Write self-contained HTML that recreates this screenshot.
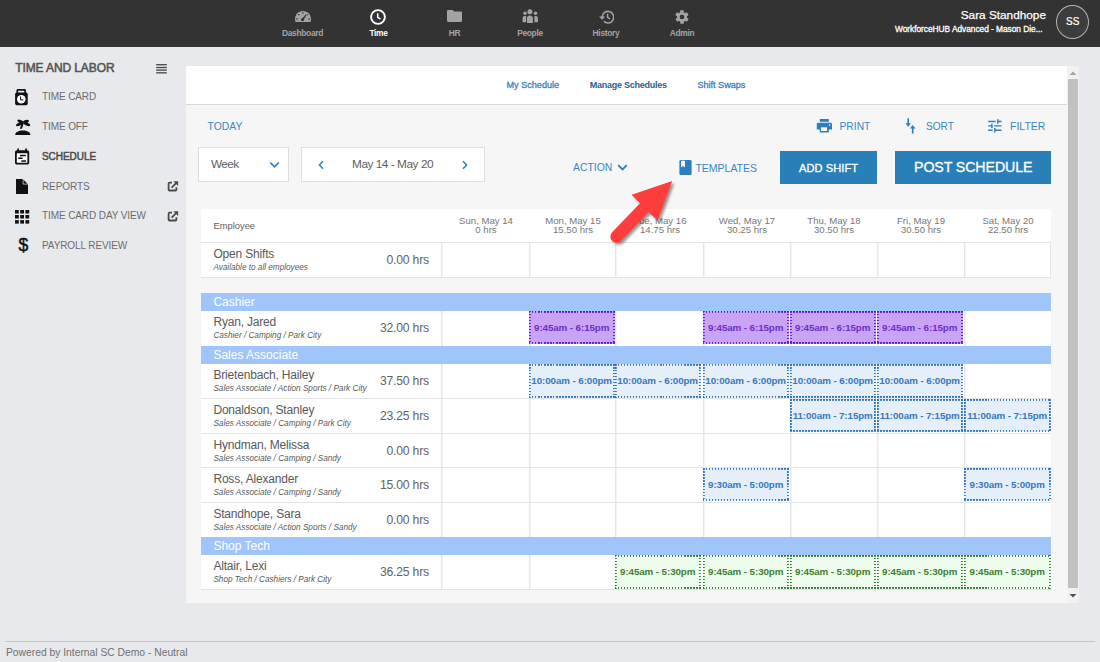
<!DOCTYPE html><html><head><meta charset="utf-8"><title>Schedule</title><style>
*{box-sizing:border-box;margin:0;padding:0}
html,body{width:1100px;height:662px;overflow:hidden}
body{position:relative;background:#e8e9ed;font-family:"Liberation Sans",sans-serif;color:#444}
.abs{position:absolute}
svg{display:block}
.t{position:absolute;white-space:nowrap;line-height:1}
.b{font-weight:bold}
.i{font-style:italic}
</style></head><body><div class="abs" style="left:0;top:0;width:1100px;height:47px;background:#333333"></div><div class="abs" style="left:295px;top:11px;width:16px;height:11px"><svg width="16" height="11" viewBox="0 0 16 11"><path fill="#a3a3a3" d="M8 0C3.6 0 0 3.6 0 8c0 1.1.2 2.1.6 3h14.8c.4-.9.6-1.9.6-3 0-4.4-3.6-8-8-8z"/><g fill="#333"><circle cx="8" cy="2" r=".8"/><circle cx="3.8" cy="3.8" r=".8"/><circle cx="12.2" cy="3.8" r=".8"/><circle cx="2" cy="8" r=".8"/><circle cx="14" cy="8" r=".8"/><circle cx="7.6" cy="8.6" r="1.6"/><path d="M7 8l3.6-4.4.8.6L8.4 9z"/></g></svg></div><div class="t" style="left:202.5px;width:200px;text-align:center;top:28.89px;font-size:8.4px;color:#a3a3a3;font-weight:bold;letter-spacing:-0.3px">Dashboard</div><div class="abs" style="left:370px;top:9px;width:16px;height:16px"><svg width="16" height="16" viewBox="0 0 16 16"><circle cx="8" cy="8" r="6.9" fill="none" stroke="#fff" stroke-width="1.9"/><path d="M7.7 4.3v4l2.7 1.7" fill="none" stroke="#fff" stroke-width="1.5"/></svg></div><div class="t" style="left:278.5px;width:200px;text-align:center;top:28.89px;font-size:8.4px;color:#ffffff;font-weight:bold;letter-spacing:-0.3px">Time</div><div class="abs" style="left:447px;top:10px;width:15px;height:12px"><svg width="15" height="12" viewBox="0 0 15 12"><path fill="#a3a3a3" d="M1.2 0h4.6l1.5 1.5h6.5c.7 0 1.2.5 1.2 1.2v8.1c0 .7-.5 1.2-1.2 1.2H1.2C.5 12 0 11.5 0 10.8V1.2C0 .5.5 0 1.2 0z"/></svg></div><div class="t" style="left:354.5px;width:200px;text-align:center;top:28.89px;font-size:8.4px;color:#a3a3a3;font-weight:bold;letter-spacing:-0.3px">HR</div><div class="abs" style="left:520px;top:8px;width:20px;height:17px"><svg width="20" height="17" viewBox="520 8 20 17"><g fill="#a3a3a3"><circle cx="529.9" cy="11.7" r="2.5"/><circle cx="525" cy="13.2" r="1.8"/><circle cx="535.5" cy="13.2" r="1.8"/><path d="M526.9 23.1v-4.8c0-1.7 1.3-2.9 3-2.9s3 1.2 3 2.9v4.8z"/><path d="M522.6 22.2v-4.2c0-1 .8-1.9 1.9-1.9h1.6v6.1z"/><path d="M537.9 22.2v-4.2c0-1-.8-1.9-1.9-1.9h-1.6v6.1z"/></g></svg></div><div class="t" style="left:430px;width:200px;text-align:center;top:28.89px;font-size:8.4px;color:#a3a3a3;font-weight:bold;letter-spacing:-0.3px">People</div><div class="abs" style="left:599px;top:10px;width:15px;height:14px"><svg width="15" height="14" viewBox="0 0 15 14"><path d="M3.1 7.2A5.8 5.8 0 1 1 4.9 11.4" fill="none" stroke="#a3a3a3" stroke-width="1.6"/><path fill="#a3a3a3" d="M0 6.6h6.2L3.1 9.8z"/><path d="M8.6 3.8v3.6l2.4 1.5" fill="none" stroke="#a3a3a3" stroke-width="1.4"/></svg></div><div class="t" style="left:506px;width:200px;text-align:center;top:28.89px;font-size:8.4px;color:#a3a3a3;font-weight:bold;letter-spacing:-0.3px">History</div><div class="abs" style="left:674px;top:9px;width:16px;height:16px"><svg width="16" height="16" viewBox="0 0 24 24"><path fill="#a3a3a3" d="M19.4 13c.04-.3.1-.6.1-1s0-.7-.1-1l2.1-1.6c.2-.2.2-.4.1-.6l-2-3.5c-.1-.2-.4-.3-.6-.2l-2.5 1c-.5-.4-1.1-.7-1.7-1l-.4-2.7c0-.2-.2-.4-.5-.4h-4c-.3 0-.5.2-.5.4l-.4 2.7c-.6.3-1.2.6-1.7 1l-2.5-1c-.2-.1-.5 0-.6.2l-2 3.5c-.1.2-.1.5.1.6L4.6 11c0 .3-.1.7-.1 1s0 .7.1 1l-2.1 1.6c-.2.2-.2.4-.1.6l2 3.5c.1.2.4.3.6.2l2.5-1c.5.4 1.1.7 1.7 1l.4 2.7c0 .2.2.4.5.4h4c.3 0 .5-.2.5-.4l.4-2.7c.6-.3 1.2-.6 1.7-1l2.5 1c.2.1.5 0 .6-.2l2-3.5c.1-.2.1-.5-.1-.6zM12 15.5a3.5 3.5 0 110-7 3.5 3.5 0 010 7z"/></svg></div><div class="t" style="left:582px;width:200px;text-align:center;top:28.89px;font-size:8.4px;color:#a3a3a3;font-weight:bold;letter-spacing:-0.3px">Admin</div><div class="t" style="right:54px;top:9.91px;font-size:11.8px;color:#fff;-webkit-text-stroke:0.25px #fff">Sara Standhope</div><div class="t" style="right:57.5px;top:24.89px;font-size:8.4px;color:#fff;-webkit-text-stroke:0.3px #fff;letter-spacing:-0.05px">WorkforceHUB Advanced - Mason Die...</div><div class="abs" style="left:1056px;top:5px;width:33px;height:34px;border-radius:50%;border:1.5px solid #b4b4b4;background:#3d3d3d"></div><div class="t" style="left:972.7px;width:200px;text-align:center;top:16.93px;font-size:10px;color:#fff;-webkit-text-stroke:0.2px #fff">SS</div><div class="t" style="left:15.2px;top:62.44px;font-size:12px;color:#555;-webkit-text-stroke:0.55px #555;letter-spacing:-0.1px">TIME AND LABOR</div><svg class="abs" style="left:156px;top:63px" width="11" height="12" viewBox="0 0 11 12"><g fill="#4a4a4a"><rect x="0.2" y="1.05" width="10.6" height="1.35"/><rect x="0.2" y="3.85" width="10.6" height="1.35"/><rect x="0.2" y="6.45" width="10.6" height="1.35"/><rect x="0.2" y="9.15" width="10.6" height="1.35"/></g></svg><div class="t" style="left:42px;top:91.53px;font-size:10px;color:#6c6c6c;letter-spacing:-0.1px">TIME CARD</div><div class="t" style="left:42px;top:122.03px;font-size:10px;color:#6c6c6c;letter-spacing:-0.1px">TIME OFF</div><div class="t" style="left:42px;top:151.94px;font-size:10px;color:#4a4a4a;-webkit-text-stroke:0.45px #4a4a4a;letter-spacing:-0.05px">SCHEDULE</div><div class="t" style="left:42px;top:181.73px;font-size:10px;color:#6c6c6c;letter-spacing:-0.1px">REPORTS</div><div class="t" style="left:42px;top:210.84px;font-size:10px;color:#6c6c6c;letter-spacing:-0.1px">TIME CARD DAY VIEW</div><div class="t" style="left:42px;top:240.53px;font-size:10px;color:#6c6c6c;letter-spacing:-0.1px">PAYROLL REVIEW</div><svg class="abs" style="left:12px;top:86px" width="20" height="22" viewBox="12 86 20 22"><path fill="#111" d="M16.4 93V90.6c0-.9.6-1.5 1.5-1.5h6.6c.9 0 1.5.6 1.5 1.5V93h-1.7v-2.2h-6.2V93z"/><rect x="15.1" y="92.6" width="12.6" height="12.6" rx="1.6" fill="#111"/><circle cx="21.3" cy="99.2" r="4.3" fill="#fff"/><path d="M20.6 96.4v3.5h2.8" stroke="#111" stroke-width="1" fill="none"/></svg><svg class="abs" style="left:12px;top:116px" width="22" height="22" viewBox="12 116 22 22"><g fill="#111"><ellipse cx="20.3" cy="121.5" rx="3.2" ry="1.5" transform="rotate(22 20.3 121.5)"/><ellipse cx="25.9" cy="121.6" rx="3.1" ry="1.6" transform="rotate(-14 25.9 121.6)"/><ellipse cx="19.4" cy="124.2" rx="3.6" ry="1.55" transform="rotate(-24 19.4 124.2)"/><ellipse cx="27" cy="124.1" rx="3.5" ry="1.55" transform="rotate(24 27 124.1)"/><path d="M22 123h1.9l-2 5.8h-2.1z"/><path d="M15.2 135c0-2.7 3.4-4.4 7.6-4.4s7.6 1.7 7.6 4.4z"/></g></svg><svg class="abs" style="left:12px;top:146px" width="20" height="21" viewBox="12 146 20 21"><path fill="#111" d="M17.3 148.6h1.7v1.6h6.2v-1.6h1.7v1.6h.4c1 0 1.9.9 1.9 1.9v10.6c0 1-.9 1.9-1.9 1.9H16.9c-1 0-1.9-.9-1.9-1.9V152.1c0-1 .9-1.9 1.9-1.9h.4z"/><rect x="16.8" y="153.3" width="10.6" height="9.4" rx=".3" fill="#fff"/><g fill="#111"><rect x="20" y="154.8" width="5.8" height="1.5"/><rect x="18.2" y="157.5" width="4.4" height="1.5"/><rect x="21.3" y="160.3" width="4.8" height="1.5"/></g></svg><svg class="abs" style="left:12px;top:176px" width="20" height="20" viewBox="12 176 20 20"><path fill="#111" d="M16 179h6.8l5.2 5.2V194H16z"/><path d="M23.1 179v5.1h4.9" fill="none" stroke="#e8e9ed" stroke-width=".7"/></svg><svg class="abs" style="left:15px;top:210px" width="15" height="14" viewBox="0 0 15 14"><g fill="#111"><rect x="0" y="0" width="3.8" height="3.5"/><rect x="0" y="5" width="3.8" height="3.5"/><rect x="0" y="10.1" width="3.8" height="3.5"/><rect x="5.2" y="0" width="3.8" height="3.5"/><rect x="5.2" y="5" width="3.8" height="3.5"/><rect x="5.2" y="10.1" width="3.8" height="3.5"/><rect x="10.4" y="0" width="3.8" height="3.5"/><rect x="10.4" y="5" width="3.8" height="3.5"/><rect x="10.4" y="10.1" width="3.8" height="3.5"/></g></svg><div class="t" style="left:18.5px;top:237.19px;font-size:17.5px;color:#111;-webkit-text-stroke:0.5px #111">$</div><svg class="abs" style="left:167px;top:181px" width="12" height="11" viewBox="0 0 12 11"><path d="M5 1.7H2.6c-.6 0-1 .4-1 1v5.8c0 .6.4 1 1 1h5.8c.6 0 1-.4 1-1V6.2" fill="none" stroke="#4a4a4a" stroke-width="1.8"/><path d="M6.4.3h4.7V5z" fill="#4a4a4a"/><path d="M4.6 6.6L9.6 1.7" stroke="#4a4a4a" stroke-width="1.8"/></svg><svg class="abs" style="left:167px;top:211px" width="12" height="11" viewBox="0 0 12 11"><path d="M5 1.7H2.6c-.6 0-1 .4-1 1v5.8c0 .6.4 1 1 1h5.8c.6 0 1-.4 1-1V6.2" fill="none" stroke="#4a4a4a" stroke-width="1.8"/><path d="M6.4.3h4.7V5z" fill="#4a4a4a"/><path d="M4.6 6.6L9.6 1.7" stroke="#4a4a4a" stroke-width="1.8"/></svg><div class="abs" style="left:186px;top:66px;width:881px;height:537px;background:#f6f6f6"></div><div class="abs" style="left:186px;top:66px;width:881px;height:39px;background:#fff;border-bottom:1px solid #d8d8d8"></div><div class="t" style="left:506.5px;top:80.80px;font-size:9.1px;color:#3a7fc0;-webkit-text-stroke:0.3px #3a7fc0">My Schedule</div><div class="t" style="left:589.8px;top:80.88px;font-size:9px;color:#2d5e90;font-weight:bold;letter-spacing:-0.25px">Manage Schedules</div><div class="t" style="left:697.4px;top:80.80px;font-size:9.1px;color:#3a7fc0;-webkit-text-stroke:0.3px #3a7fc0">Shift Swaps</div><div class="abs" style="left:1067px;top:66px;width:12px;height:537px;background:#f1f1f1"></div><div class="abs" style="left:1068px;top:79px;width:10px;height:509px;background:#c1c1c1"></div><svg class="abs" style="left:1068px;top:70px" width="10" height="6"><path d="M1.5 5h7L5 1.5z" fill="#a3a3a3"/></svg><svg class="abs" style="left:1068px;top:593px" width="10" height="6"><path d="M1.5 1h7L5 4.5z" fill="#505050"/></svg><div class="abs" style="left:5px;top:641px;width:1090px;height:1px;background:#c6c6c6"></div><div class="t" style="left:6px;top:647.98px;font-size:10.3px;color:#707070;">Powered by Internal SC Demo - Neutral</div><div class="t" style="left:207.5px;top:121.50px;font-size:10.4px;color:#3a86c4;">TODAY</div><div class="abs" style="left:198px;top:147px;width:91px;height:35px;background:#fff;border:1px solid #dedede"></div><div class="t" style="left:211px;top:159.21px;font-size:11.8px;color:#5e5e5e;letter-spacing:-0.6px">Week</div><svg class="abs" style="left:269px;top:161px" width="11" height="8"><path d="M1.2 1.5l4.3 4.3 4.3-4.3" fill="none" stroke="#2b7fbf" stroke-width="1.7"/></svg><div class="abs" style="left:301px;top:147px;width:184px;height:35px;background:#fff;border:1px solid #dedede"></div><div class="t" style="left:352px;top:158.71px;font-size:11.8px;color:#5e5e5e;letter-spacing:-0.45px">May 14 - May 20</div><svg class="abs" style="left:317px;top:160px" width="8" height="10"><path d="M6 1.3L2.4 5 6 8.7" fill="none" stroke="#2b7fbf" stroke-width="1.5"/></svg><svg class="abs" style="left:461px;top:160px" width="8" height="10"><path d="M2 1.3L5.6 5 2 8.7" fill="none" stroke="#2b7fbf" stroke-width="1.5"/></svg><svg class="abs" style="left:814px;top:117px" width="20" height="18" viewBox="814 117 20 18"><g fill="#2b7fbf"><rect x="819.8" y="119" width="9" height="2.8"/><path d="M818.3 122.8h12.2c.9 0 1.5.6 1.5 1.5v5.3h-3.2v3h-9v-3h-3V124.3c0-.9.6-1.5 1.5-1.5z"/></g><rect x="821" y="127.3" width="6" height="3.7" fill="#f6f6f6"/><circle cx="829.6" cy="125.1" r=".8" fill="#f6f6f6"/></svg><div class="t" style="left:839.5px;top:122.08px;font-size:10.3px;color:#3a86c4;">PRINT</div><svg class="abs" style="left:902px;top:116px" width="16" height="19" viewBox="902 116 16 19"><g fill="#2b7fbf" stroke="#2b7fbf"><path d="M908.2 118.2V124" stroke-width="1.6" fill="none"/><path d="M905.4 123.3H911L908.2 126.7z" stroke="none"/><path d="M909.9 128.5H915.5L912.7 125z" stroke="none"/><path d="M912.7 127.8V133.6" stroke-width="1.6" fill="none"/></g></svg><div class="t" style="left:926px;top:122.25px;font-size:10.1px;color:#3a86c4;">SORT</div><svg class="abs" style="left:985.6px;top:116.7px" width="17.76" height="17.76" viewBox="0 0 24 24"><path fill="#2b7fbf" d="M3 17v2h6v-2H3zM3 5v2h10V5H3zm10 16v-2h8v-2h-8v-2h-2v6h2zM7 9v2H3v2h4v2h2V9H7zm14 4v-2H11v2h10zm-6-4h2V7h4V5h-4V3h-2v6z"/></svg><div class="t" style="left:1010px;top:121.11px;font-size:10.5px;color:#3a86c4;">FILTER</div><div class="t" style="left:573px;top:163.40px;font-size:10.4px;color:#3a86c4;">ACTION</div><svg class="abs" style="left:617px;top:164px" width="11" height="7"><path d="M1.2 1.2l4.3 4.3 4.3-4.3" fill="none" stroke="#2b7fbf" stroke-width="1.8"/></svg><svg class="abs" style="left:678px;top:158px" width="16" height="19" viewBox="678 158 16 19"><rect x="679.4" y="160" width="12.2" height="15" rx="1.3" fill="#2b7fbf"/><path d="M681 160.8h4v6.8l-2-1.5-2 1.5z" fill="#f6f6f6"/></svg><div class="t" style="left:695.4px;top:162.51px;font-size:10.5px;color:#3a86c4;">TEMPLATES</div><div class="abs" style="left:780px;top:151px;width:97px;height:33px;background:#2980b9"></div><div class="t" style="left:728.6px;width:200px;text-align:center;top:162.60px;font-size:11.1px;color:#fff;-webkit-text-stroke:0.3px #fff;letter-spacing:0.05px">ADD SHIFT</div><div class="abs" style="left:895px;top:151px;width:156px;height:33px;background:#2980b9"></div><div class="t" style="left:873.2px;width:200px;text-align:center;top:160.28px;font-size:14.2px;color:#fff;-webkit-text-stroke:0.3px #fff;letter-spacing:-0.1px">POST SCHEDULE</div><div class="abs" style="left:201px;top:209px;width:850px;height:68px;background:#fff"></div><div class="abs" style="left:201px;top:242px;width:850px;height:1px;background:#e4e4e4"></div><div class="abs" style="left:201px;top:277px;width:850px;height:1px;background:#e4e4e4"></div><div class="abs" style="left:441px;top:243px;width:2px;height:34px;background:linear-gradient(90deg,#e6e6e6 50%,#f3f3f3 50%)"></div><div class="abs" style="left:529px;top:243px;width:2px;height:34px;background:linear-gradient(90deg,#e6e6e6 50%,#f3f3f3 50%)"></div><div class="abs" style="left:615px;top:243px;width:2px;height:34px;background:linear-gradient(90deg,#e6e6e6 50%,#f3f3f3 50%)"></div><div class="abs" style="left:703px;top:243px;width:2px;height:34px;background:linear-gradient(90deg,#e6e6e6 50%,#f3f3f3 50%)"></div><div class="abs" style="left:790px;top:243px;width:2px;height:34px;background:linear-gradient(90deg,#e6e6e6 50%,#f3f3f3 50%)"></div><div class="abs" style="left:877px;top:243px;width:2px;height:34px;background:linear-gradient(90deg,#e6e6e6 50%,#f3f3f3 50%)"></div><div class="abs" style="left:964px;top:243px;width:2px;height:34px;background:linear-gradient(90deg,#e6e6e6 50%,#f3f3f3 50%)"></div><div class="t" style="left:213.4px;top:220.84px;font-size:9.4px;color:#626262;">Employee</div><div class="abs" style="left:1050px;top:243px;width:1px;height:34px;background:#e4e4e4"></div><div class="t" style="left:386px;width:200px;text-align:center;top:216.37px;font-size:9.6px;color:#777;">Sun, May 14</div><div class="t" style="left:386px;width:200px;text-align:center;top:225.37px;font-size:9.6px;color:#777;">0 hrs</div><div class="t" style="left:473px;width:200px;text-align:center;top:216.37px;font-size:9.6px;color:#777;">Mon, May 15</div><div class="t" style="left:473px;width:200px;text-align:center;top:225.37px;font-size:9.6px;color:#777;">15.50 hrs</div><div class="t" style="left:560px;width:200px;text-align:center;top:216.37px;font-size:9.6px;color:#777;">Tue, May 16</div><div class="t" style="left:560px;width:200px;text-align:center;top:225.37px;font-size:9.6px;color:#777;">14.75 hrs</div><div class="t" style="left:647px;width:200px;text-align:center;top:216.37px;font-size:9.6px;color:#777;">Wed, May 17</div><div class="t" style="left:647px;width:200px;text-align:center;top:225.37px;font-size:9.6px;color:#777;">30.25 hrs</div><div class="t" style="left:734px;width:200px;text-align:center;top:216.37px;font-size:9.6px;color:#777;">Thu, May 18</div><div class="t" style="left:734px;width:200px;text-align:center;top:225.37px;font-size:9.6px;color:#777;">30.50 hrs</div><div class="t" style="left:821px;width:200px;text-align:center;top:216.37px;font-size:9.6px;color:#777;">Fri, May 19</div><div class="t" style="left:821px;width:200px;text-align:center;top:225.37px;font-size:9.6px;color:#777;">30.50 hrs</div><div class="t" style="left:908px;width:200px;text-align:center;top:216.37px;font-size:9.6px;color:#777;">Sat, May 20</div><div class="t" style="left:908px;width:200px;text-align:center;top:225.37px;font-size:9.6px;color:#777;">22.50 hrs</div><div class="t" style="left:213.4px;top:248.24px;font-size:12px;color:#595959;letter-spacing:-0.18px">Open Shifts</div><div class="t" style="left:213.4px;top:264.46px;font-size:8.2px;color:#5a5a5a;font-style:italic">Available to all employees</div><div class="t" style="right:671.1px;top:253.87px;font-size:12.2px;color:#636363;letter-spacing:-0.2px">0.00 hrs</div><div class="abs" style="left:201px;top:293px;width:850px;height:296px;background:#fff"></div><div class="abs" style="left:201px;top:293px;width:850px;height:18px;background:#9fc5fb"></div><div class="t" style="left:213.4px;top:295.64px;font-size:12px;color:#fff;">Cashier</div><div class="abs" style="left:441px;top:311px;width:2px;height:35px;background:linear-gradient(90deg,#e6e6e6 50%,#f3f3f3 50%)"></div><div class="abs" style="left:529px;top:311px;width:2px;height:35px;background:linear-gradient(90deg,#e6e6e6 50%,#f3f3f3 50%)"></div><div class="abs" style="left:615px;top:311px;width:2px;height:35px;background:linear-gradient(90deg,#e6e6e6 50%,#f3f3f3 50%)"></div><div class="abs" style="left:703px;top:311px;width:2px;height:35px;background:linear-gradient(90deg,#e6e6e6 50%,#f3f3f3 50%)"></div><div class="abs" style="left:790px;top:311px;width:2px;height:35px;background:linear-gradient(90deg,#e6e6e6 50%,#f3f3f3 50%)"></div><div class="abs" style="left:877px;top:311px;width:2px;height:35px;background:linear-gradient(90deg,#e6e6e6 50%,#f3f3f3 50%)"></div><div class="abs" style="left:964px;top:311px;width:2px;height:35px;background:linear-gradient(90deg,#e6e6e6 50%,#f3f3f3 50%)"></div><div class="t" style="left:213.4px;top:316.04px;font-size:12px;color:#595959;letter-spacing:-0.18px">Ryan, Jared</div><div class="t" style="left:213.4px;top:331.56px;font-size:8.2px;color:#5a5a5a;font-style:italic">Cashier / Camping / Park City</div><div class="t" style="right:671.1px;top:321.97px;font-size:12.2px;color:#636363;letter-spacing:-0.2px">32.00 hrs</div><div class="abs" style="left:201px;top:346px;width:850px;height:18px;background:#9fc5fb"></div><div class="t" style="left:213.4px;top:348.64px;font-size:12px;color:#fff;">Sales Associate</div><div class="abs" style="left:201px;top:398px;width:850px;height:1px;background:#e4e4e4"></div><div class="abs" style="left:441px;top:364px;width:2px;height:34px;background:linear-gradient(90deg,#e6e6e6 50%,#f3f3f3 50%)"></div><div class="abs" style="left:529px;top:364px;width:2px;height:34px;background:linear-gradient(90deg,#e6e6e6 50%,#f3f3f3 50%)"></div><div class="abs" style="left:615px;top:364px;width:2px;height:34px;background:linear-gradient(90deg,#e6e6e6 50%,#f3f3f3 50%)"></div><div class="abs" style="left:703px;top:364px;width:2px;height:34px;background:linear-gradient(90deg,#e6e6e6 50%,#f3f3f3 50%)"></div><div class="abs" style="left:790px;top:364px;width:2px;height:34px;background:linear-gradient(90deg,#e6e6e6 50%,#f3f3f3 50%)"></div><div class="abs" style="left:877px;top:364px;width:2px;height:34px;background:linear-gradient(90deg,#e6e6e6 50%,#f3f3f3 50%)"></div><div class="abs" style="left:964px;top:364px;width:2px;height:34px;background:linear-gradient(90deg,#e6e6e6 50%,#f3f3f3 50%)"></div><div class="t" style="left:213.4px;top:369.04px;font-size:12px;color:#595959;letter-spacing:-0.18px">Brietenbach, Hailey</div><div class="t" style="left:213.4px;top:384.56px;font-size:8.2px;color:#5a5a5a;font-style:italic">Sales Associate / Action Sports / Park City</div><div class="t" style="right:671.1px;top:374.97px;font-size:12.2px;color:#636363;letter-spacing:-0.2px">37.50 hrs</div><div class="abs" style="left:201px;top:433px;width:850px;height:1px;background:#e4e4e4"></div><div class="abs" style="left:441px;top:399px;width:2px;height:34px;background:linear-gradient(90deg,#e6e6e6 50%,#f3f3f3 50%)"></div><div class="abs" style="left:529px;top:399px;width:2px;height:34px;background:linear-gradient(90deg,#e6e6e6 50%,#f3f3f3 50%)"></div><div class="abs" style="left:615px;top:399px;width:2px;height:34px;background:linear-gradient(90deg,#e6e6e6 50%,#f3f3f3 50%)"></div><div class="abs" style="left:703px;top:399px;width:2px;height:34px;background:linear-gradient(90deg,#e6e6e6 50%,#f3f3f3 50%)"></div><div class="abs" style="left:790px;top:399px;width:2px;height:34px;background:linear-gradient(90deg,#e6e6e6 50%,#f3f3f3 50%)"></div><div class="abs" style="left:877px;top:399px;width:2px;height:34px;background:linear-gradient(90deg,#e6e6e6 50%,#f3f3f3 50%)"></div><div class="abs" style="left:964px;top:399px;width:2px;height:34px;background:linear-gradient(90deg,#e6e6e6 50%,#f3f3f3 50%)"></div><div class="t" style="left:213.4px;top:404.04px;font-size:12px;color:#595959;letter-spacing:-0.18px">Donaldson, Stanley</div><div class="t" style="left:213.4px;top:419.56px;font-size:8.2px;color:#5a5a5a;font-style:italic">Sales Associate / Camping / Park City</div><div class="t" style="right:671.1px;top:409.97px;font-size:12.2px;color:#636363;letter-spacing:-0.2px">23.25 hrs</div><div class="abs" style="left:201px;top:467px;width:850px;height:1px;background:#e4e4e4"></div><div class="abs" style="left:441px;top:434px;width:2px;height:33px;background:linear-gradient(90deg,#e6e6e6 50%,#f3f3f3 50%)"></div><div class="abs" style="left:529px;top:434px;width:2px;height:33px;background:linear-gradient(90deg,#e6e6e6 50%,#f3f3f3 50%)"></div><div class="abs" style="left:615px;top:434px;width:2px;height:33px;background:linear-gradient(90deg,#e6e6e6 50%,#f3f3f3 50%)"></div><div class="abs" style="left:703px;top:434px;width:2px;height:33px;background:linear-gradient(90deg,#e6e6e6 50%,#f3f3f3 50%)"></div><div class="abs" style="left:790px;top:434px;width:2px;height:33px;background:linear-gradient(90deg,#e6e6e6 50%,#f3f3f3 50%)"></div><div class="abs" style="left:877px;top:434px;width:2px;height:33px;background:linear-gradient(90deg,#e6e6e6 50%,#f3f3f3 50%)"></div><div class="abs" style="left:964px;top:434px;width:2px;height:33px;background:linear-gradient(90deg,#e6e6e6 50%,#f3f3f3 50%)"></div><div class="t" style="left:213.4px;top:439.04px;font-size:12px;color:#595959;letter-spacing:-0.18px">Hyndman, Melissa</div><div class="t" style="left:213.4px;top:454.56px;font-size:8.2px;color:#5a5a5a;font-style:italic">Sales Associate / Camping / Sandy</div><div class="t" style="right:671.1px;top:444.97px;font-size:12.2px;color:#636363;letter-spacing:-0.2px">0.00 hrs</div><div class="abs" style="left:201px;top:502px;width:850px;height:1px;background:#e4e4e4"></div><div class="abs" style="left:441px;top:468px;width:2px;height:34px;background:linear-gradient(90deg,#e6e6e6 50%,#f3f3f3 50%)"></div><div class="abs" style="left:529px;top:468px;width:2px;height:34px;background:linear-gradient(90deg,#e6e6e6 50%,#f3f3f3 50%)"></div><div class="abs" style="left:615px;top:468px;width:2px;height:34px;background:linear-gradient(90deg,#e6e6e6 50%,#f3f3f3 50%)"></div><div class="abs" style="left:703px;top:468px;width:2px;height:34px;background:linear-gradient(90deg,#e6e6e6 50%,#f3f3f3 50%)"></div><div class="abs" style="left:790px;top:468px;width:2px;height:34px;background:linear-gradient(90deg,#e6e6e6 50%,#f3f3f3 50%)"></div><div class="abs" style="left:877px;top:468px;width:2px;height:34px;background:linear-gradient(90deg,#e6e6e6 50%,#f3f3f3 50%)"></div><div class="abs" style="left:964px;top:468px;width:2px;height:34px;background:linear-gradient(90deg,#e6e6e6 50%,#f3f3f3 50%)"></div><div class="t" style="left:213.4px;top:473.04px;font-size:12px;color:#595959;letter-spacing:-0.18px">Ross, Alexander</div><div class="t" style="left:213.4px;top:488.56px;font-size:8.2px;color:#5a5a5a;font-style:italic">Sales Associate / Camping / Sandy</div><div class="t" style="right:671.1px;top:478.97px;font-size:12.2px;color:#636363;letter-spacing:-0.2px">15.00 hrs</div><div class="abs" style="left:441px;top:503px;width:2px;height:34px;background:linear-gradient(90deg,#e6e6e6 50%,#f3f3f3 50%)"></div><div class="abs" style="left:529px;top:503px;width:2px;height:34px;background:linear-gradient(90deg,#e6e6e6 50%,#f3f3f3 50%)"></div><div class="abs" style="left:615px;top:503px;width:2px;height:34px;background:linear-gradient(90deg,#e6e6e6 50%,#f3f3f3 50%)"></div><div class="abs" style="left:703px;top:503px;width:2px;height:34px;background:linear-gradient(90deg,#e6e6e6 50%,#f3f3f3 50%)"></div><div class="abs" style="left:790px;top:503px;width:2px;height:34px;background:linear-gradient(90deg,#e6e6e6 50%,#f3f3f3 50%)"></div><div class="abs" style="left:877px;top:503px;width:2px;height:34px;background:linear-gradient(90deg,#e6e6e6 50%,#f3f3f3 50%)"></div><div class="abs" style="left:964px;top:503px;width:2px;height:34px;background:linear-gradient(90deg,#e6e6e6 50%,#f3f3f3 50%)"></div><div class="t" style="left:213.4px;top:508.04px;font-size:12px;color:#595959;letter-spacing:-0.18px">Standhope, Sara</div><div class="t" style="left:213.4px;top:523.56px;font-size:8.2px;color:#5a5a5a;font-style:italic">Sales Associate / Action Sports / Sandy</div><div class="t" style="right:671.1px;top:513.97px;font-size:12.2px;color:#636363;letter-spacing:-0.2px">0.00 hrs</div><div class="abs" style="left:201px;top:537px;width:850px;height:18px;background:#9fc5fb"></div><div class="t" style="left:213.4px;top:539.64px;font-size:12px;color:#fff;">Shop Tech</div><div class="abs" style="left:201px;top:589px;width:850px;height:1px;background:#e4e4e4"></div><div class="abs" style="left:441px;top:555px;width:2px;height:34px;background:linear-gradient(90deg,#e6e6e6 50%,#f3f3f3 50%)"></div><div class="abs" style="left:529px;top:555px;width:2px;height:34px;background:linear-gradient(90deg,#e6e6e6 50%,#f3f3f3 50%)"></div><div class="abs" style="left:615px;top:555px;width:2px;height:34px;background:linear-gradient(90deg,#e6e6e6 50%,#f3f3f3 50%)"></div><div class="abs" style="left:703px;top:555px;width:2px;height:34px;background:linear-gradient(90deg,#e6e6e6 50%,#f3f3f3 50%)"></div><div class="abs" style="left:790px;top:555px;width:2px;height:34px;background:linear-gradient(90deg,#e6e6e6 50%,#f3f3f3 50%)"></div><div class="abs" style="left:877px;top:555px;width:2px;height:34px;background:linear-gradient(90deg,#e6e6e6 50%,#f3f3f3 50%)"></div><div class="abs" style="left:964px;top:555px;width:2px;height:34px;background:linear-gradient(90deg,#e6e6e6 50%,#f3f3f3 50%)"></div><div class="t" style="left:213.4px;top:560.04px;font-size:12px;color:#595959;letter-spacing:-0.18px">Altair, Lexi</div><div class="t" style="left:213.4px;top:575.56px;font-size:8.2px;color:#5a5a5a;font-style:italic">Shop Tech / Cashiers / Park City</div><div class="t" style="right:671.1px;top:565.97px;font-size:12.2px;color:#636363;letter-spacing:-0.2px">36.25 hrs</div><div class="abs" style="left:529px;top:311px;width:86px;height:33px;background:repeating-linear-gradient(90deg,#5a14d2 0 1.5px,transparent 1.5px 3px) 0 0/100% 1.8px no-repeat,repeating-linear-gradient(90deg,#5a14d2 0 1.5px,transparent 1.5px 3px) 0 100%/100% 1.8px no-repeat,repeating-linear-gradient(180deg,#5a14d2 0 1.5px,transparent 1.5px 3px) 0 0/1.8px 100% no-repeat,repeating-linear-gradient(180deg,#5a14d2 0 1.5px,transparent 1.5px 3px) 100% 0/1.8px 100% no-repeat,#c9a3f6"></div><div class="t" style="left:471.70000000000005px;width:200px;text-align:center;top:322.61px;font-size:9.8px;color:#6d30c6;font-weight:bold;letter-spacing:-0.1px">9:45am - 6:15pm</div><div class="abs" style="left:703px;top:311px;width:86px;height:33px;background:repeating-linear-gradient(90deg,#5a14d2 0 1.5px,transparent 1.5px 3px) 0 0/100% 1.8px no-repeat,repeating-linear-gradient(90deg,#5a14d2 0 1.5px,transparent 1.5px 3px) 0 100%/100% 1.8px no-repeat,repeating-linear-gradient(180deg,#5a14d2 0 1.5px,transparent 1.5px 3px) 0 0/1.8px 100% no-repeat,repeating-linear-gradient(180deg,#5a14d2 0 1.5px,transparent 1.5px 3px) 100% 0/1.8px 100% no-repeat,#c9a3f6"></div><div class="t" style="left:645.7px;width:200px;text-align:center;top:322.61px;font-size:9.8px;color:#6d30c6;font-weight:bold;letter-spacing:-0.1px">9:45am - 6:15pm</div><div class="abs" style="left:790px;top:311px;width:86px;height:33px;background:repeating-linear-gradient(90deg,#5a14d2 0 1.5px,transparent 1.5px 3px) 0 0/100% 1.8px no-repeat,repeating-linear-gradient(90deg,#5a14d2 0 1.5px,transparent 1.5px 3px) 0 100%/100% 1.8px no-repeat,repeating-linear-gradient(180deg,#5a14d2 0 1.5px,transparent 1.5px 3px) 0 0/1.8px 100% no-repeat,repeating-linear-gradient(180deg,#5a14d2 0 1.5px,transparent 1.5px 3px) 100% 0/1.8px 100% no-repeat,#c9a3f6"></div><div class="t" style="left:732.7px;width:200px;text-align:center;top:322.61px;font-size:9.8px;color:#6d30c6;font-weight:bold;letter-spacing:-0.1px">9:45am - 6:15pm</div><div class="abs" style="left:877px;top:311px;width:86px;height:33px;background:repeating-linear-gradient(90deg,#5a14d2 0 1.5px,transparent 1.5px 3px) 0 0/100% 1.8px no-repeat,repeating-linear-gradient(90deg,#5a14d2 0 1.5px,transparent 1.5px 3px) 0 100%/100% 1.8px no-repeat,repeating-linear-gradient(180deg,#5a14d2 0 1.5px,transparent 1.5px 3px) 0 0/1.8px 100% no-repeat,repeating-linear-gradient(180deg,#5a14d2 0 1.5px,transparent 1.5px 3px) 100% 0/1.8px 100% no-repeat,#c9a3f6"></div><div class="t" style="left:819.7px;width:200px;text-align:center;top:322.61px;font-size:9.8px;color:#6d30c6;font-weight:bold;letter-spacing:-0.1px">9:45am - 6:15pm</div><div class="abs" style="left:529px;top:364px;width:86px;height:34px;background:repeating-linear-gradient(90deg,#2f74bd 0 1.5px,transparent 1.5px 3px) 0 0/100% 1.8px no-repeat,repeating-linear-gradient(90deg,#2f74bd 0 1.5px,transparent 1.5px 3px) 0 100%/100% 1.8px no-repeat,repeating-linear-gradient(180deg,#2f74bd 0 1.5px,transparent 1.5px 3px) 0 0/1.8px 100% no-repeat,repeating-linear-gradient(180deg,#2f74bd 0 1.5px,transparent 1.5px 3px) 100% 0/1.8px 100% no-repeat,#e4effa"></div><div class="t" style="left:471.70000000000005px;width:200px;text-align:center;top:376.11px;font-size:9.8px;color:#3a78bd;font-weight:bold;letter-spacing:-0.1px">10:00am - 6:00pm</div><div class="abs" style="left:615px;top:364px;width:86px;height:34px;background:repeating-linear-gradient(90deg,#2f74bd 0 1.5px,transparent 1.5px 3px) 0 0/100% 1.8px no-repeat,repeating-linear-gradient(90deg,#2f74bd 0 1.5px,transparent 1.5px 3px) 0 100%/100% 1.8px no-repeat,repeating-linear-gradient(180deg,#2f74bd 0 1.5px,transparent 1.5px 3px) 0 0/1.8px 100% no-repeat,repeating-linear-gradient(180deg,#2f74bd 0 1.5px,transparent 1.5px 3px) 100% 0/1.8px 100% no-repeat,#e4effa"></div><div class="t" style="left:557.7px;width:200px;text-align:center;top:376.11px;font-size:9.8px;color:#3a78bd;font-weight:bold;letter-spacing:-0.1px">10:00am - 6:00pm</div><div class="abs" style="left:703px;top:364px;width:86px;height:34px;background:repeating-linear-gradient(90deg,#2f74bd 0 1.5px,transparent 1.5px 3px) 0 0/100% 1.8px no-repeat,repeating-linear-gradient(90deg,#2f74bd 0 1.5px,transparent 1.5px 3px) 0 100%/100% 1.8px no-repeat,repeating-linear-gradient(180deg,#2f74bd 0 1.5px,transparent 1.5px 3px) 0 0/1.8px 100% no-repeat,repeating-linear-gradient(180deg,#2f74bd 0 1.5px,transparent 1.5px 3px) 100% 0/1.8px 100% no-repeat,#e4effa"></div><div class="t" style="left:645.7px;width:200px;text-align:center;top:376.11px;font-size:9.8px;color:#3a78bd;font-weight:bold;letter-spacing:-0.1px">10:00am - 6:00pm</div><div class="abs" style="left:790px;top:364px;width:86px;height:34px;background:repeating-linear-gradient(90deg,#2f74bd 0 1.5px,transparent 1.5px 3px) 0 0/100% 1.8px no-repeat,repeating-linear-gradient(90deg,#2f74bd 0 1.5px,transparent 1.5px 3px) 0 100%/100% 1.8px no-repeat,repeating-linear-gradient(180deg,#2f74bd 0 1.5px,transparent 1.5px 3px) 0 0/1.8px 100% no-repeat,repeating-linear-gradient(180deg,#2f74bd 0 1.5px,transparent 1.5px 3px) 100% 0/1.8px 100% no-repeat,#e4effa"></div><div class="t" style="left:732.7px;width:200px;text-align:center;top:376.11px;font-size:9.8px;color:#3a78bd;font-weight:bold;letter-spacing:-0.1px">10:00am - 6:00pm</div><div class="abs" style="left:877px;top:364px;width:86px;height:34px;background:repeating-linear-gradient(90deg,#2f74bd 0 1.5px,transparent 1.5px 3px) 0 0/100% 1.8px no-repeat,repeating-linear-gradient(90deg,#2f74bd 0 1.5px,transparent 1.5px 3px) 0 100%/100% 1.8px no-repeat,repeating-linear-gradient(180deg,#2f74bd 0 1.5px,transparent 1.5px 3px) 0 0/1.8px 100% no-repeat,repeating-linear-gradient(180deg,#2f74bd 0 1.5px,transparent 1.5px 3px) 100% 0/1.8px 100% no-repeat,#e4effa"></div><div class="t" style="left:819.7px;width:200px;text-align:center;top:376.11px;font-size:9.8px;color:#3a78bd;font-weight:bold;letter-spacing:-0.1px">10:00am - 6:00pm</div><div class="abs" style="left:790px;top:399px;width:86px;height:33px;background:repeating-linear-gradient(90deg,#2f74bd 0 1.5px,transparent 1.5px 3px) 0 0/100% 1.8px no-repeat,repeating-linear-gradient(90deg,#2f74bd 0 1.5px,transparent 1.5px 3px) 0 100%/100% 1.8px no-repeat,repeating-linear-gradient(180deg,#2f74bd 0 1.5px,transparent 1.5px 3px) 0 0/1.8px 100% no-repeat,repeating-linear-gradient(180deg,#2f74bd 0 1.5px,transparent 1.5px 3px) 100% 0/1.8px 100% no-repeat,#e4effa"></div><div class="t" style="left:732.7px;width:200px;text-align:center;top:410.61px;font-size:9.8px;color:#3a78bd;font-weight:bold;letter-spacing:-0.1px">11:00am - 7:15pm</div><div class="abs" style="left:877px;top:399px;width:86px;height:33px;background:repeating-linear-gradient(90deg,#2f74bd 0 1.5px,transparent 1.5px 3px) 0 0/100% 1.8px no-repeat,repeating-linear-gradient(90deg,#2f74bd 0 1.5px,transparent 1.5px 3px) 0 100%/100% 1.8px no-repeat,repeating-linear-gradient(180deg,#2f74bd 0 1.5px,transparent 1.5px 3px) 0 0/1.8px 100% no-repeat,repeating-linear-gradient(180deg,#2f74bd 0 1.5px,transparent 1.5px 3px) 100% 0/1.8px 100% no-repeat,#e4effa"></div><div class="t" style="left:819.7px;width:200px;text-align:center;top:410.61px;font-size:9.8px;color:#3a78bd;font-weight:bold;letter-spacing:-0.1px">11:00am - 7:15pm</div><div class="abs" style="left:964px;top:399px;width:87px;height:33px;background:repeating-linear-gradient(90deg,#2f74bd 0 1.5px,transparent 1.5px 3px) 0 0/100% 1.8px no-repeat,repeating-linear-gradient(90deg,#2f74bd 0 1.5px,transparent 1.5px 3px) 0 100%/100% 1.8px no-repeat,repeating-linear-gradient(180deg,#2f74bd 0 1.5px,transparent 1.5px 3px) 0 0/1.8px 100% no-repeat,repeating-linear-gradient(180deg,#2f74bd 0 1.5px,transparent 1.5px 3px) 100% 0/1.8px 100% no-repeat,#e4effa"></div><div class="t" style="left:907.2px;width:200px;text-align:center;top:410.61px;font-size:9.8px;color:#3a78bd;font-weight:bold;letter-spacing:-0.1px">11:00am - 7:15pm</div><div class="abs" style="left:703px;top:468px;width:86px;height:33px;background:repeating-linear-gradient(90deg,#2f74bd 0 1.5px,transparent 1.5px 3px) 0 0/100% 1.8px no-repeat,repeating-linear-gradient(90deg,#2f74bd 0 1.5px,transparent 1.5px 3px) 0 100%/100% 1.8px no-repeat,repeating-linear-gradient(180deg,#2f74bd 0 1.5px,transparent 1.5px 3px) 0 0/1.8px 100% no-repeat,repeating-linear-gradient(180deg,#2f74bd 0 1.5px,transparent 1.5px 3px) 100% 0/1.8px 100% no-repeat,#e4effa"></div><div class="t" style="left:645.7px;width:200px;text-align:center;top:479.61px;font-size:9.8px;color:#3a78bd;font-weight:bold;letter-spacing:-0.1px">9:30am - 5:00pm</div><div class="abs" style="left:964px;top:468px;width:87px;height:33px;background:repeating-linear-gradient(90deg,#2f74bd 0 1.5px,transparent 1.5px 3px) 0 0/100% 1.8px no-repeat,repeating-linear-gradient(90deg,#2f74bd 0 1.5px,transparent 1.5px 3px) 0 100%/100% 1.8px no-repeat,repeating-linear-gradient(180deg,#2f74bd 0 1.5px,transparent 1.5px 3px) 0 0/1.8px 100% no-repeat,repeating-linear-gradient(180deg,#2f74bd 0 1.5px,transparent 1.5px 3px) 100% 0/1.8px 100% no-repeat,#e4effa"></div><div class="t" style="left:907.2px;width:200px;text-align:center;top:479.61px;font-size:9.8px;color:#3a78bd;font-weight:bold;letter-spacing:-0.1px">9:30am - 5:00pm</div><div class="abs" style="left:615px;top:555px;width:86px;height:34px;background:repeating-linear-gradient(90deg,#2b7d2b 0 1.5px,transparent 1.5px 3px) 0 0/100% 1.8px no-repeat,repeating-linear-gradient(90deg,#2b7d2b 0 1.5px,transparent 1.5px 3px) 0 100%/100% 1.8px no-repeat,repeating-linear-gradient(180deg,#2b7d2b 0 1.5px,transparent 1.5px 3px) 0 0/1.8px 100% no-repeat,repeating-linear-gradient(180deg,#2b7d2b 0 1.5px,transparent 1.5px 3px) 100% 0/1.8px 100% no-repeat,#effdee"></div><div class="t" style="left:557.7px;width:200px;text-align:center;top:567.11px;font-size:9.8px;color:#40802f;font-weight:bold;letter-spacing:-0.1px">9:45am - 5:30pm</div><div class="abs" style="left:703px;top:555px;width:86px;height:34px;background:repeating-linear-gradient(90deg,#2b7d2b 0 1.5px,transparent 1.5px 3px) 0 0/100% 1.8px no-repeat,repeating-linear-gradient(90deg,#2b7d2b 0 1.5px,transparent 1.5px 3px) 0 100%/100% 1.8px no-repeat,repeating-linear-gradient(180deg,#2b7d2b 0 1.5px,transparent 1.5px 3px) 0 0/1.8px 100% no-repeat,repeating-linear-gradient(180deg,#2b7d2b 0 1.5px,transparent 1.5px 3px) 100% 0/1.8px 100% no-repeat,#effdee"></div><div class="t" style="left:645.7px;width:200px;text-align:center;top:567.11px;font-size:9.8px;color:#40802f;font-weight:bold;letter-spacing:-0.1px">9:45am - 5:30pm</div><div class="abs" style="left:790px;top:555px;width:86px;height:34px;background:repeating-linear-gradient(90deg,#2b7d2b 0 1.5px,transparent 1.5px 3px) 0 0/100% 1.8px no-repeat,repeating-linear-gradient(90deg,#2b7d2b 0 1.5px,transparent 1.5px 3px) 0 100%/100% 1.8px no-repeat,repeating-linear-gradient(180deg,#2b7d2b 0 1.5px,transparent 1.5px 3px) 0 0/1.8px 100% no-repeat,repeating-linear-gradient(180deg,#2b7d2b 0 1.5px,transparent 1.5px 3px) 100% 0/1.8px 100% no-repeat,#effdee"></div><div class="t" style="left:732.7px;width:200px;text-align:center;top:567.11px;font-size:9.8px;color:#40802f;font-weight:bold;letter-spacing:-0.1px">9:45am - 5:30pm</div><div class="abs" style="left:877px;top:555px;width:86px;height:34px;background:repeating-linear-gradient(90deg,#2b7d2b 0 1.5px,transparent 1.5px 3px) 0 0/100% 1.8px no-repeat,repeating-linear-gradient(90deg,#2b7d2b 0 1.5px,transparent 1.5px 3px) 0 100%/100% 1.8px no-repeat,repeating-linear-gradient(180deg,#2b7d2b 0 1.5px,transparent 1.5px 3px) 0 0/1.8px 100% no-repeat,repeating-linear-gradient(180deg,#2b7d2b 0 1.5px,transparent 1.5px 3px) 100% 0/1.8px 100% no-repeat,#effdee"></div><div class="t" style="left:819.7px;width:200px;text-align:center;top:567.11px;font-size:9.8px;color:#40802f;font-weight:bold;letter-spacing:-0.1px">9:45am - 5:30pm</div><div class="abs" style="left:964px;top:555px;width:87px;height:34px;background:repeating-linear-gradient(90deg,#2b7d2b 0 1.5px,transparent 1.5px 3px) 0 0/100% 1.8px no-repeat,repeating-linear-gradient(90deg,#2b7d2b 0 1.5px,transparent 1.5px 3px) 0 100%/100% 1.8px no-repeat,repeating-linear-gradient(180deg,#2b7d2b 0 1.5px,transparent 1.5px 3px) 0 0/1.8px 100% no-repeat,repeating-linear-gradient(180deg,#2b7d2b 0 1.5px,transparent 1.5px 3px) 100% 0/1.8px 100% no-repeat,#effdee"></div><div class="t" style="left:907.2px;width:200px;text-align:center;top:567.11px;font-size:9.8px;color:#40802f;font-weight:bold;letter-spacing:-0.1px">9:45am - 5:30pm</div><svg class="abs" style="left:590px;top:170px" width="100" height="80" viewBox="590 170 100 80">
<defs><filter id="sh" x="-30%" y="-30%" width="160%" height="160%"><feGaussianBlur in="SourceAlpha" stdDeviation="1.6"/><feOffset dx="1.5" dy="2" result="o"/><feComponentTransfer><feFuncA type="linear" slope="0.45"/></feComponentTransfer><feMerge><feMergeNode/><feMergeNode in="SourceGraphic"/></feMerge></filter></defs>
<g filter="url(#sh)" fill="#ff3e3e">
<path d="M672.2 181.1L631.6 194.8L640.5 203.8L645 208.4L649.5 212.9L657.7 220.5z"/>
<path d="M616.6 236.6L645.5 206.5" stroke="#ff3e3e" stroke-width="12.5" stroke-linecap="round"/>
</g></svg></body></html>
